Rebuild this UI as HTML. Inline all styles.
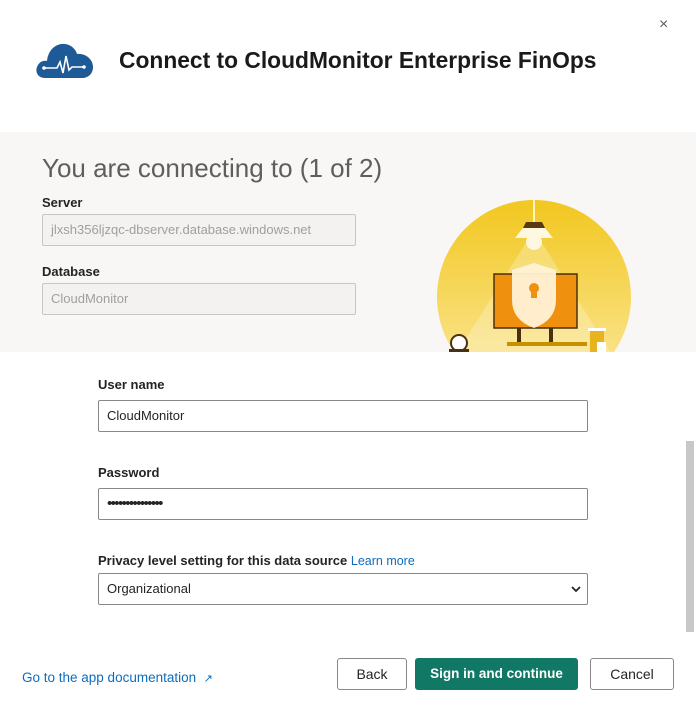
<!DOCTYPE html>
<html><head><meta charset="utf-8"><style>
*{box-sizing:border-box;margin:0;padding:0}
body{width:696px;height:712px;background:#fff;font-family:"Liberation Sans",sans-serif;position:relative;overflow:hidden;color:#252423}
.a{position:absolute}
.lbl{font-size:13px;font-weight:bold;color:#252423}
.inp{position:absolute;border:1px solid #8a8886;border-radius:2px;height:32px;font-size:13px;padding:0 8px;line-height:30px;background:#fff}
.dis{background:#f3f2f1;border-color:#c8c6c4;color:#a19f9d}
.btn{position:absolute;top:658px;height:32px;border-radius:3px;font-size:14px;text-align:center;line-height:30px;border:1px solid #8a8886;background:#fff}
</style></head><body>
<svg class="a" style="left:35px;top:40px" width="60" height="40" viewBox="0 0 60 40">
<path d="M10 38 C3 38 0 32 2 27 C4 22 8 20 12 21 C13 10 21 3 30 4 C37 5 41 10 42 14 C50 13 58 19 58 27 C58 34 53 38 47 38 Z" fill="#1e5a96"/>
<polyline points="9,28 22,28 25,22 28,33 31,16 34,30 37,27 49,27" fill="none" stroke="#fff" stroke-width="1.6"/>
<circle cx="9" cy="28" r="1.8" fill="#fff"/><circle cx="49" cy="27" r="1.8" fill="#fff"/>
</svg>
<div class="a" style="left:119px;top:47px;font-size:22.8px;font-weight:bold;color:#1b1a19">Connect to CloudMonitor Enterprise FinOps</div>
<div class="a" style="left:659px;top:16px;font-size:16px;color:#605e5c">×</div>
<div class="a" style="left:0;top:132px;width:696px;height:220px;background:#f8f7f6;overflow:hidden">
<svg class="a" style="left:437px;top:68px" width="194" height="153" viewBox="0 0 194 153">
<defs><linearGradient id="g" x1="0" y1="0" x2="0" y2="1"><stop offset="0" stop-color="#f2c71f"/><stop offset="1" stop-color="#fbe9a0"/></linearGradient></defs>
<circle cx="97" cy="97" r="97" fill="url(#g)"/>
<polygon points="97,30 20,153 174,153" fill="#fff" opacity=".25"/>
<rect x="96" y="0" width="2" height="22" fill="#fff3c0"/>
<polygon points="89,22 105,22 108,28 86,28" fill="#5a3a10"/>
<path d="M78 38 L86 28 L108 28 L116 38 Z" fill="#fff8e0"/>
<circle cx="97" cy="42" r="8" fill="#fff8e0"/>
<rect x="57" y="74" width="83" height="54" fill="#f0900f" stroke="#4a3010" stroke-width="1.5"/>
<path d="M75 70 L97 63 L119 70 L119 100 Q119 120 97 128 Q75 120 75 100 Z" fill="#fff2d6" opacity=".95"/>
<circle cx="97" cy="88" r="5" fill="#f0900f"/><rect x="94" y="90" width="6" height="8" fill="#f0900f"/>
<rect x="80" y="128" width="4" height="14" fill="#4a3010"/><rect x="112" y="128" width="4" height="14" fill="#4a3010"/>
<rect x="70" y="142" width="80" height="4" fill="#c69000"/>
<circle cx="22" cy="143" r="8" fill="#fff" stroke="#4a3010" stroke-width="2"/>
<rect x="12" y="149" width="20" height="5" fill="#4a3010"/>
<rect x="153" y="130" width="14" height="22" fill="#e9b320"/><rect x="151" y="128" width="18" height="3" fill="#fff"/>
<rect x="160" y="142" width="9" height="10" fill="#fff"/>
</svg>
</div>
<div class="a" style="left:42px;top:153px;font-size:26px;color:#605e5c">You are connecting to (1 of 2)</div>
<div class="a lbl" style="left:42px;top:195px">Server</div>
<div class="inp dis" style="left:42px;top:214px;width:314px">jlxsh356ljzqc-dbserver.database.windows.net</div>
<div class="a lbl" style="left:42px;top:264px">Database</div>
<div class="inp dis" style="left:42px;top:283px;width:314px">CloudMonitor</div>
<div class="a lbl" style="left:98px;top:377px">User name</div>
<div class="inp" style="left:98px;top:400px;width:490px">CloudMonitor</div>
<div class="a lbl" style="left:98px;top:465px">Password</div>
<div class="inp" style="left:98px;top:488px;width:490px;font-size:15px;letter-spacing:-1.6px">•••••••••••••••</div>
<div class="a lbl" style="left:98px;top:553px">Privacy level setting for this data source <span style="font-weight:normal;color:#0f6cbd;font-size:12.5px">Learn more</span></div>
<div class="inp" style="left:98px;top:573px;width:490px">Organizational
<svg class="a" style="right:6px;top:11px" width="10" height="8" viewBox="0 0 10 8"><polyline points="1,2 5,6 9,2" fill="none" stroke="#252423" stroke-width="1.8"/></svg></div>
<div class="a" style="left:686px;top:441px;width:8px;height:191px;background:#c8c8c8"></div>
<div class="a" style="left:22px;top:670px;font-size:13.5px;color:#0f6cbd">Go to the app documentation &nbsp;<span style="font-size:11px">↗</span></div>
<div class="btn" style="left:337px;width:70px">Back</div>
<div class="btn" style="left:415px;width:163px;background:#117865;border-color:#117865;color:#fff;font-weight:bold;font-size:13.5px">Sign in and continue</div>
<div class="btn" style="left:590px;width:84px">Cancel</div>
</body></html>
